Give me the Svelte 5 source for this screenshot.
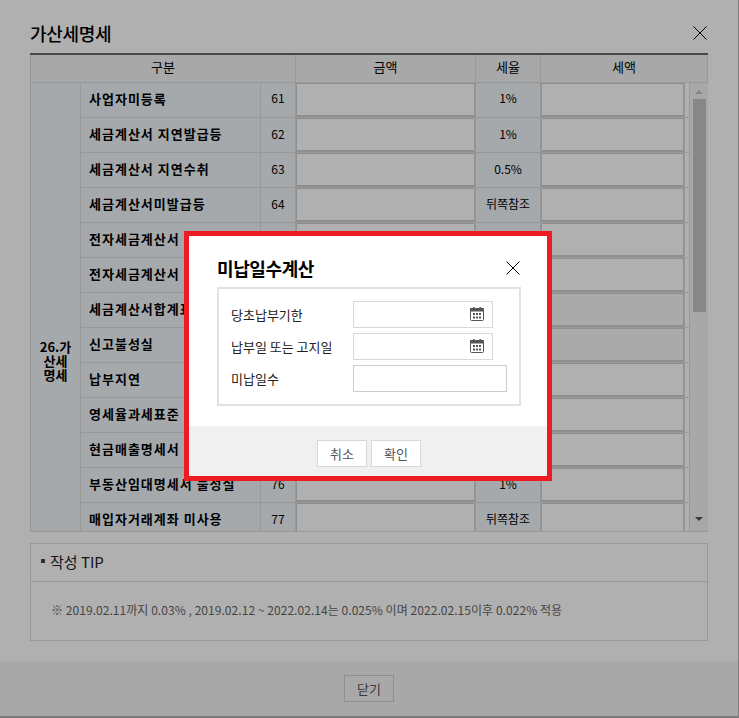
<script>
  // 가산세 rows; 5-12 sit mostly behind the dialog
  const rows = [
    { label: "사업자미등록", no: 61, rate: "1%" },
    { label: "세금계산서 지연발급등", no: 62, rate: "1%" },
    { label: "세금계산서 지연수취", no: 63, rate: "0.5%" },
    { label: "세금계산서미발급등", no: 64, rate: "뒤쪽참조" },
    { label: "전자세금계산서 지연전송", no: 65, rate: "0.3%" },
    { label: "전자세금계산서 미전송", no: 66, rate: "0.5%" },
    { label: "세금계산서합계표 불성실", no: 67, rate: "0.5%", locked: true },
    { label: "신고불성실", no: 69, rate: "뒤쪽참조", locked: true },
    { label: "납부지연", no: 73, rate: "뒤쪽참조" },
    { label: "영세율과세표준 신고불성실", no: 74, rate: "0.5%" },
    { label: "현금매출명세서 불성실", no: 75, rate: "1%" },
    { label: "부동산임대명세서 불성실", no: 76, rate: "1%" },
    { label: "매입자거래계좌 미사용", no: 77, rate: "뒤쪽참조" },
  ];
</script>

<div class="page">
  <div class="sheet">
    <div class="sheet-title">
      <h2>가산세명세</h2>
      <svg class="close" viewBox="0 0 14 14" width="14" height="14" aria-hidden="true">
        <path d="M0.5 0.5 13.5 13.5 M13.5 0.5 0.5 13.5" stroke="#000" stroke-width="1" fill="none" />
      </svg>
    </div>

    <div class="grid">
      <table class="grid-head">
        <colgroup>
          <col style="width:265px" />
          <col style="width:180px" />
          <col style="width:65px" />
          <col />
        </colgroup>
        <thead>
          <tr>
            <th>구분</th>
            <th>금액</th>
            <th>세율</th>
            <th>세액</th>
          </tr>
        </thead>
      </table>

      <div class="grid-body">
        <div class="grid-scroll">
          <table>
            <colgroup>
              <col style="width:50px" />
              <col style="width:180px" />
              <col style="width:35px" />
              <col style="width:180px" />
              <col style="width:65px" />
              <col />
              <col style="width:5px" />
            </colgroup>
            <tbody>
              {#each rows as row, i}
                <tr>
                  {#if i === 0}
                    <!-- the section runs on past the visible rows, so its label sits low -->
                    <td class="section" rowspan={rows.length}>26.가<br />산세<br />명세</td>
                  {/if}
                  <td class="label"><span>{row.label}</span></td>
                  <td class="tint center">{row.no}</td>
                  <td class="field"><input type="text" disabled={row.locked} /></td>
                  <td class="tint center">{row.rate}</td>
                  <td class="field"><input type="text" disabled={row.locked} /></td>
                  <td></td>
                </tr>
              {/each}
            </tbody>
          </table>
        </div>
        <div class="scrollbar">
          <span class="arrow up"></span>
          <span class="thumb"></span>
          <span class="arrow down"></span>
        </div>
      </div>
    </div>

    <section class="tip">
      <h3>작성 TIP</h3>
      <p>※ 2019.02.11까지 0.03% , 2019.02.12 ~ 2022.02.14는 0.025% 이며 2022.02.15이후 0.022% 적용</p>
    </section>

    <div class="sheet-foot">
      <button class="btn">닫기</button>
    </div>
  </div>

  <div class="scrim"></div>

  <div class="dialog">
    <div class="dialog-main">
      <div class="dialog-title">
        <h2>미납일수계산</h2>
        <svg viewBox="0 0 14 14" width="14" height="14" aria-hidden="true">
          <path d="M0.5 0.5 13.5 13.5 M13.5 0.5 0.5 13.5" stroke="#000" stroke-width="1" fill="none" />
        </svg>
      </div>
      <div class="form">
        <label for="due">당초납부기한</label>
        <div class="date">
          <input id="due" type="text" />
          {@render calendar()}
        </div>
        <label for="paid">납부일 또는 고지일</label>
        <div class="date">
          <input id="paid" type="text" />
          {@render calendar()}
        </div>
        <label for="days">미납일수</label>
        <input id="days" class="wide" type="text" />
      </div>
    </div>
    <div class="dialog-foot">
      <button class="btn light">취소</button>
      <button class="btn light">확인</button>
    </div>
  </div>
</div>

{#snippet calendar()}
  <svg class="cal" viewBox="0 0 14 14" width="14" height="14" aria-hidden="true">
    <rect x="0.5" y="1.5" width="13" height="12" rx="1" fill="none" stroke="#555" />
    <rect x="0" y="1" width="14" height="3.5" fill="#555" />
    <rect x="3" y="0" width="1.5" height="2" fill="#555" />
    <rect x="9.5" y="0" width="1.5" height="2" fill="#555" />
    <path
      d="M3 6h2v2H3z M6 6h2v2H6z M9 6h2v2H9z M3 9.500h2v2H3z M6 9.500h2v2H6z M9 9.500h2v2H9z"
      fill="#555"
    />
  </svg>
{/snippet}

<style>
  :global(body) {
    margin: 0;
    background: #b3b3b3;
  }

  .page {
    position: relative;
    height: 100vh;
    overflow: hidden;
    font-family: "Noto Sans CJK KR", "Liberation Sans", sans-serif;
    color: #000;
  }

  .sheet {
    width: 738px;
    height: 716px;
    background: #fff;
    display: flex;
    flex-direction: column;
  }

  .sheet-title {
    display: flex;
    align-items: center;
    justify-content: space-between;
    height: 53px;
    padding: 13px 31px 0 30px;
    flex: none;
    box-sizing: border-box;
  }

  h2 {
    margin: 0;
    font-size: 18px;
    font-weight: 500;
    line-height: 1;
    letter-spacing: -0.3px;
  }

  .grid {
    margin: 0 30px;
    width: 678px;
    flex: none;
  }

  table {
    border-collapse: collapse;
    table-layout: fixed;
    width: 100%;
    font-size: 13px;
  }

  .grid-head {
    border-top: 2px solid #6b6b6b;
  }

  th {
    height: 28px;
    box-sizing: border-box;
    padding: 0 0 3px;
    font-weight: 400;
    background: #f3f3f3;
    border: 1px solid #dcdcdc;
    border-top: 0;
    line-height: 1;
  }

  .grid-body {
    display: flex;
    height: 449px;
    border-bottom: 1px solid #dcdcdc;
    box-sizing: border-box;
  }

  .grid-scroll {
    width: 660px;
    flex: none;
    overflow: hidden;
  }

  td {
    height: 35px;
    padding: 0;
    box-sizing: border-box;
    border: 1px solid #dcdcdc;
    border-top: 0;
    line-height: 1;
    white-space: nowrap;
    overflow: hidden;
  }

  .section {
    background: #eff5fa;
    text-align: center;
    font-weight: 700;
    line-height: 14px;
    padding-top: 102px;
  }

  .label {
    background: #eff5fa;
    padding: 0 0 3px 8px;
    font-weight: 700;
    letter-spacing: 1px;
  }

  .tint {
    background: #eff5fa;
  }

  .center {
    text-align: center;
    font-size: 12px;
    padding-bottom: 3px;
  }

  .field {
    padding: 0;
  }

  .field input {
    display: block;
    width: 100%;
    height: 34px;
    box-sizing: border-box;
    margin: 0;
    padding: 0;
    background: #fff;
    border: 1px solid #d0d0d0;
    border-bottom-width: 2px;
    border-radius: 0;
  }

  .field input:disabled {
    background: #f6f6f6;
  }

  .scrollbar {
    flex: 1;
    display: flex;
    flex-direction: column;
    align-items: center;
    background: #f3f3f3;
  }

  .thumb {
    width: 13px;
    height: 213px;
    background: #c4c4c4;
  }

  .arrow {
    width: 0;
    height: 0;
    border-left: 4px solid transparent;
    border-right: 4px solid transparent;
    flex: none;
  }

  .arrow.up {
    margin: 7px 0 5px;
    border-bottom: 4px solid #c0c0c0;
  }

  .arrow.down {
    margin-top: 205px;
    border-top: 4px solid #555;
  }

  .tip {
    margin: 11px 30px 0;
    width: 678px;
    height: 98px;
    box-sizing: border-box;
    border: 1px solid #dcdcdc;
    flex: none;
  }

  h3 {
    margin: 0;
    height: 38px;
    box-sizing: border-box;
    display: flex;
    align-items: center;
    gap: 5px;
    padding: 0 0 2px 10px;
    font-size: 15px;
    font-weight: 400;
    line-height: 1;
    color: #222;
    border-bottom: 1px solid #dcdcdc;
  }

  h3::before {
    content: "";
    width: 4px;
    height: 4px;
    background: #444;
  }

  .tip p {
    margin: 0;
    padding: 21px 0 0 20px;
    font-size: 12px;
    line-height: 14px;
    letter-spacing: 0.05px;
    color: #666;
    white-space: nowrap;
  }

  .sheet-foot {
    margin-top: 20px;
    flex: 1;
    display: flex;
    justify-content: center;
    padding-top: 14px;
    box-sizing: border-box;
    background: #f4f4f4;
  }

  .btn {
    width: 50px;
    height: 27px;
    padding: 0;
    box-sizing: border-box;
    font: inherit;
    font-size: 13px;
    line-height: 1;
    color: #555;
    background: #f4f4f4;
    border: 1px solid #d0d0d0;
    border-radius: 0;
  }

  .scrim {
    position: absolute;
    inset: 0;
    background: rgba(0, 0, 0, 0.31);
  }

  .dialog {
    position: absolute;
    left: 184px;
    top: 231px;
    width: 368px;
    height: 250px;
    box-sizing: border-box;
    display: flex;
    flex-direction: column;
    background: #fff;
    border: 5px solid #ed1c24;
  }

  .dialog-main {
    flex: 1;
    padding: 0 26px 0 28px;
  }

  .dialog-title {
    display: flex;
    align-items: center;
    justify-content: space-between;
    height: 51px;
    box-sizing: border-box;
    padding: 12px 1px 0 0;
  }

  .dialog-title h2 {
    font-weight: 700;
    letter-spacing: -0.4px;
  }

  .form {
    box-sizing: border-box;
    height: 119px;
    border: 2px solid #e2e2e2;
    padding: 12px 12px 0;
    display: grid;
    grid-template-columns: 122px 1fr;
    grid-auto-rows: 27px;
    row-gap: 5px;
    align-items: center;
    font-size: 13px;
    line-height: 1;
    color: #222;
  }

  .form input {
    box-sizing: border-box;
    display: block;
    width: 100%;
    height: 27px;
    margin: 0;
    padding: 0;
    background: #fff;
    border: 1px solid #d8d8d8;
    border-radius: 0;
  }

  .form input.wide {
    width: 154px;
    border-color: #ccc;
  }

  .date {
    position: relative;
    width: 140px;
  }

  .cal {
    position: absolute;
    right: 9px;
    top: 6px;
  }

  .dialog-foot {
    height: 50px;
    box-sizing: border-box;
    padding: 14px 0 0 2px;
    display: flex;
    justify-content: center;
    gap: 4px;
    background: #f0f0f0;
  }

  .btn.light {
    background: #fff;
    border-color: #d8d8d8;
  }
</style>
